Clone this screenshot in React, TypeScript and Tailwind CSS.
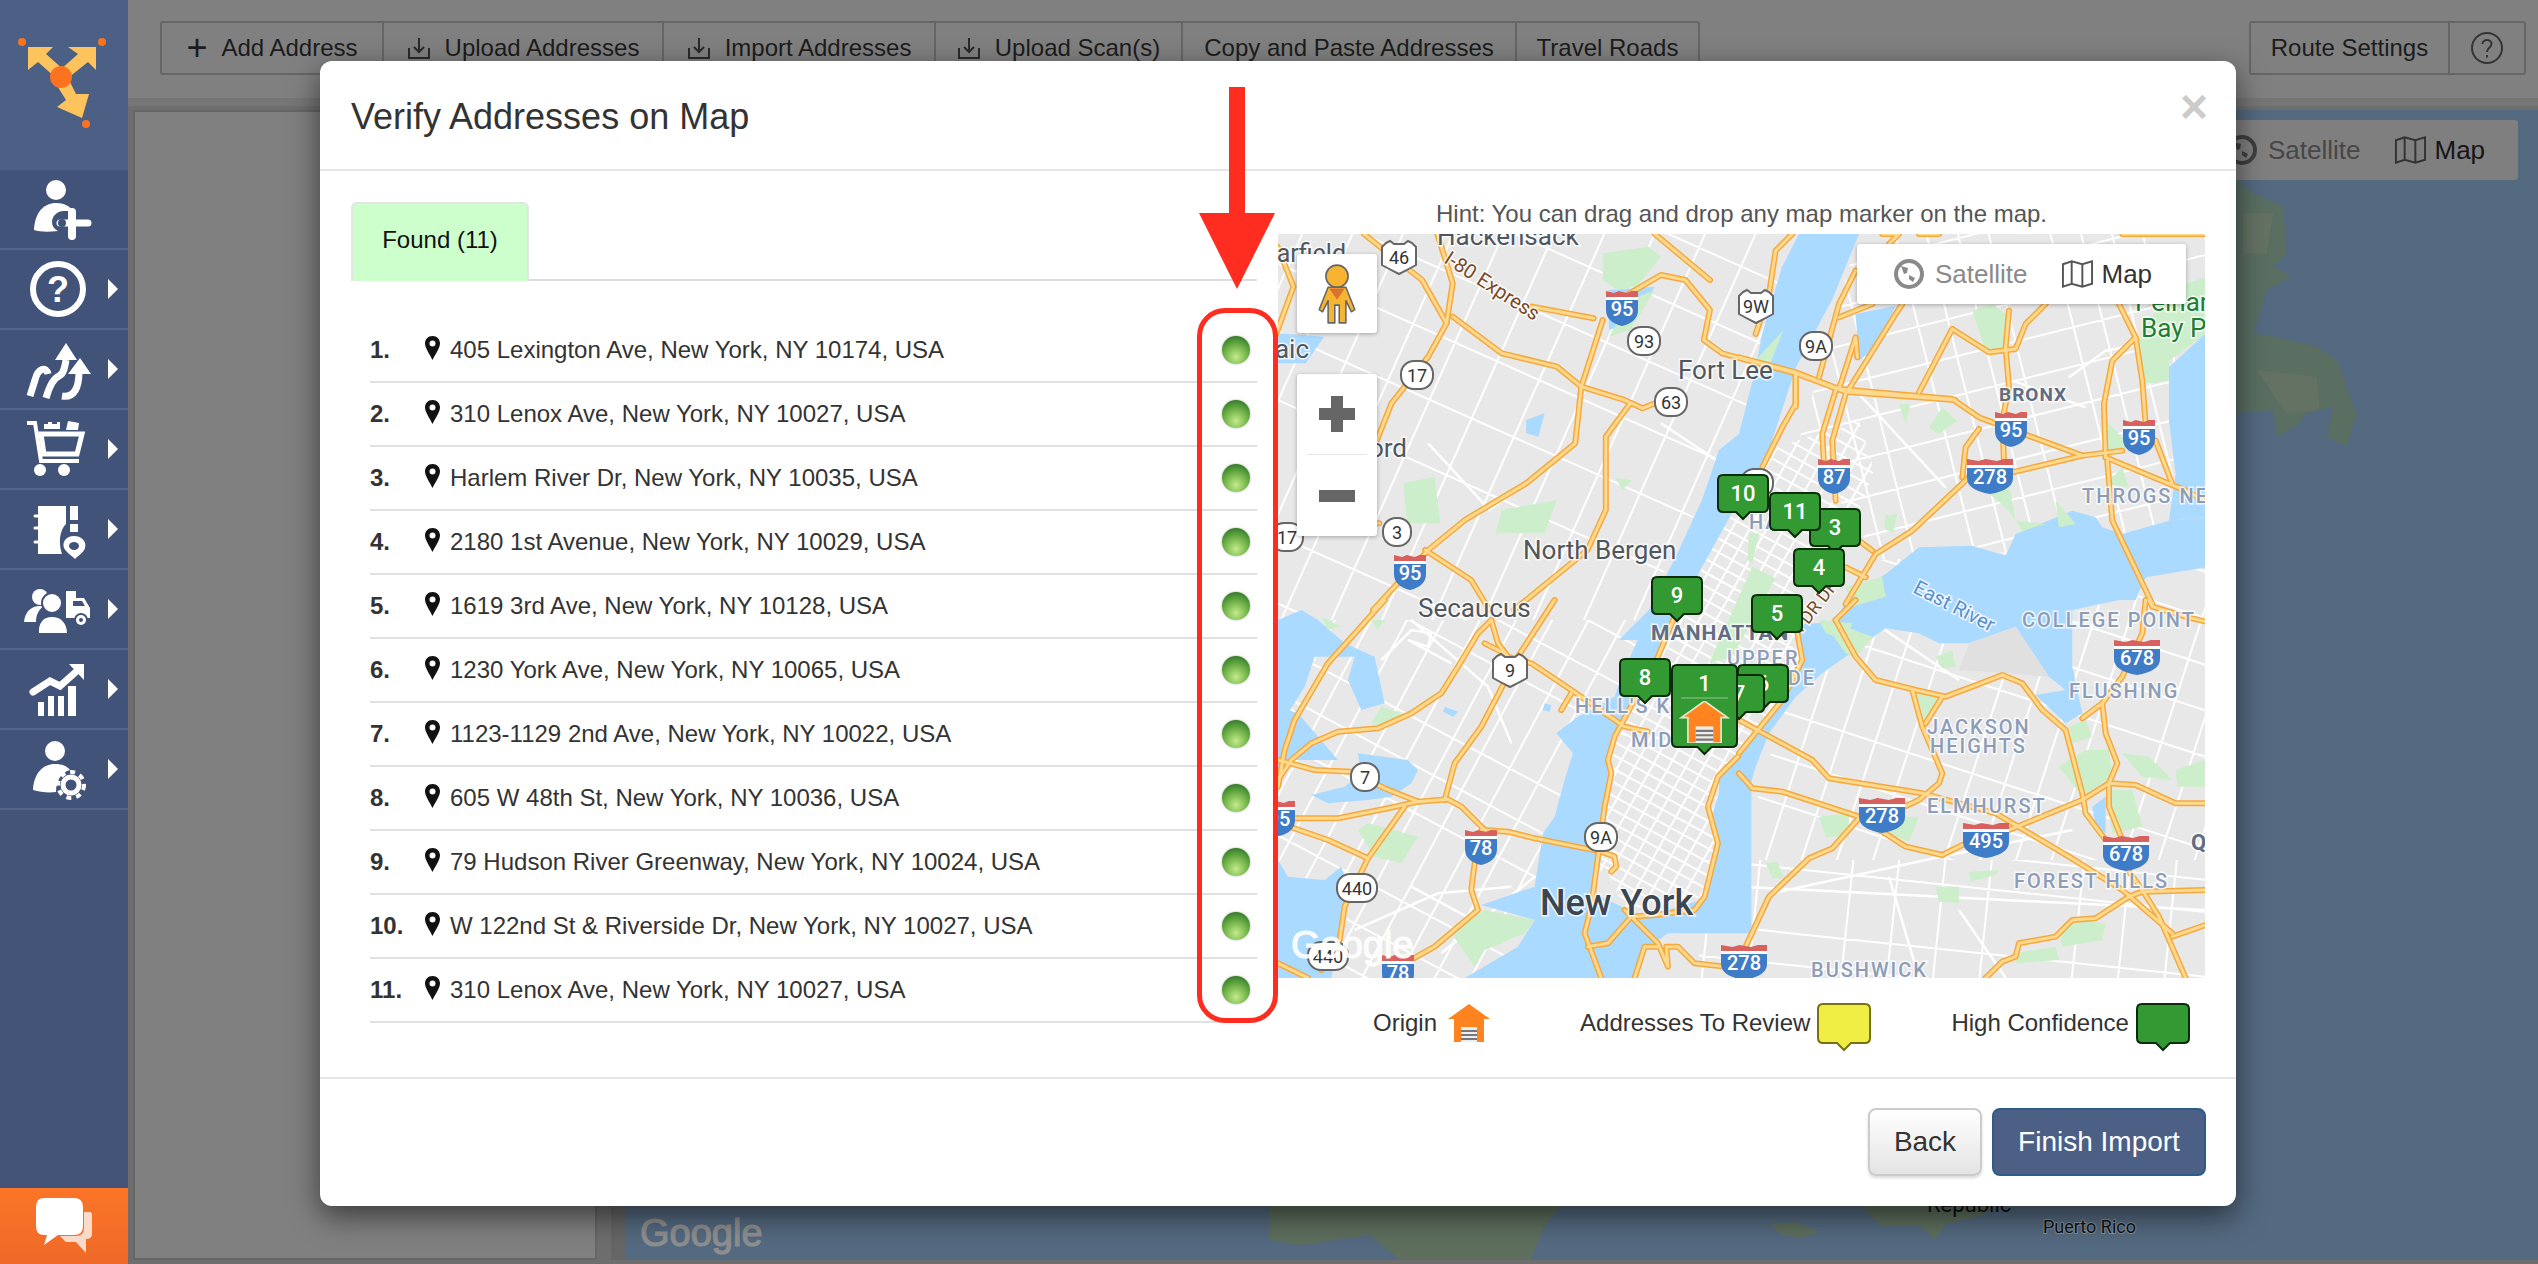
import type { ReactNode } from "react";

// groups map the coordinates read off zoomed crops onto screen coordinates
const GROUPS = {
  a: "translate(1270 190) scale(.6124 .3333)",
  b: "translate(1279 600) scale(.3333)",
  c: "translate(1740 234) scale(.3333)",
  d: "translate(1740 600) scale(.3333)",
  z: "translate(1600 450) scale(.3333)",
  s: "",
};
type GroupKey = keyof typeof GROUPS;
type Layer = Partial<Record<GroupKey, string[]>>;

const WATER: Layer = {
  s: ["M1800,234 L1783,267 L1763,334 L1757,367 L1740,434 L1720,450 L1703,500 L1680,550 L1650,610 L1620,640 L1656,640 L1686,600 L1703,567 L1733,513 L1770,450 L1797,367 L1833,300 L1860,234 Z"],
  b: [
    "M1130,0 L1075,130 L1030,230 L1010,290 L900,350 L835,400 L885,460 L860,540 L830,650 L795,700 L770,860 L610,915 L770,960 L720,1040 L560,1134 L1070,1134 L1100,1050 L1170,1000 L1420,1000 L1420,550 L1330,560 L1300,650 L1320,730 L1270,900 L1100,950 L1040,925 L950,880 L970,770 L990,600 L990,480 L1010,400 L1140,170 L1190,60 L1220,0 Z",
    "M0,60 L70,30 L120,60 L200,130 L290,170 L320,310 L250,330 L210,240 L230,170 L110,170 L80,260 L30,340 L0,330 Z",
    "M240,460 L390,480 L420,510 L400,550 L340,590 L270,600 L150,610 L100,585 L200,560 L250,520 Z",
    "M0,320 L60,340 L180,480 L40,480 L0,520 Z",
    "M0,780 L30,830 L140,840 L190,800 L215,880 L190,960 L160,1134 L0,1134 Z",
    "M800,310 L820,315 L815,335 L795,330 Z",
    "M500,320 L540,335 L525,350 L495,335 Z",
  ],
  d: [
    "M170,70 L190,180 L130,300 L0,470 L-60,540 L-60,800 L30,790 L30,570 L50,500 L90,400 L170,290 L250,220 L440,85 L540,100 L600,130 L690,130 L830,80 L930,230 L980,270 L890,285 L980,370 L1030,340 L1000,200 L1000,30 L1140,0 L1190,0 L1220,-68 L1400,-98 L1400,-248 L1290,-238 L1150,-198 L1090,-218 L1070,-248 L1000,-268 L880,-218 L830,-198 L800,-133 L700,-163 L540,-158 L440,-78 L330,-10 L290,60 L240,70 Z",
    "M1060,620 L1100,590 L1100,700 L1070,680 Z",
  ],
  c: [
    "M1290,400 L1398,300 L1398,850 L1290,860 L1310,720 L1290,560 Z",
    "M350,240 L470,215 L410,340 L360,380 Z",
  ],
  a: [
    "M555,300 L630,290 L590,400 L555,420 Z",
    "M14,430 L90,440 L60,520 L14,520 Z",
    "M420,690 L450,670 L440,740 L420,730 Z",
  ],
};

const PARKS: Layer = {
  a: [
    "M620,170 L640,200 L600,290 L570,300 L545,270 L545,190 Z",
    "M590,330 L630,300 L590,420 L555,440 Z",
    "M790,520 L840,420 L810,560 Z",
    "M220,880 L270,860 L280,1000 L225,1000 Z",
    "M380,960 L470,930 L450,1030 L370,1030 Z",
  ],
  b: [
    "M520,1000 L620,930 L770,960 L740,1000 L620,1050 L590,1100 Z",
    "M240,690 L270,670 L420,710 L370,790 L290,770 Z",
    "M280,370 L310,320 L370,340 L340,380 Z",
    "M130,50 L190,80 L150,90 Z",
    "M280,60 L320,60 L300,90 Z",
  ],
  z: [
    "M460,350 L530,385 L400,620 L330,640 Z",
    "M450,250 L480,250 L460,340 L445,330 Z",
    "M740,410 L850,380 L860,440 L760,470 Z",
    "M660,510 L760,520 L740,570 L680,550 Z",
    "M50,85 L100,90 L70,120 Z",
    "M860,200 L895,190 L880,245 L860,240 Z",
  ],
  c: [
    "M1340,150 L1398,130 L1398,300 L1290,380 L1290,440 L1220,450 L1190,350 L1210,290 L1270,200 Z",
    "M1100,560 L1180,640 L1110,650 Z",
    "M700,230 L760,210 L800,240 L800,340 L740,350 Z",
    "M480,510 L515,510 L500,570 Z",
    "M570,580 L610,520 L655,560 L600,600 Z",
    "M740,770 L810,750 L830,860 L920,870 L850,890 L810,830 Z",
    "M440,840 L470,850 L465,895 L435,880 Z",
    "M950,800 L1010,870 L960,880 Z",
    "M1150,700 L1100,750 L1170,760 Z",
  ],
  d: [
    "M530,280 L610,290 L560,370 Z",
    "M960,500 L1040,450 L1110,450 L1120,530 L1030,590 Z",
    "M1100,570 L1180,570 L1210,680 L1120,700 Z",
    "M1150,460 L1230,470 L1300,540 L1210,530 Z",
    "M1310,510 L1398,480 L1398,560 L1315,560 Z",
    "M240,650 L330,640 L330,710 L260,710 Z",
    "M480,650 L540,650 L510,725 L450,700 Z",
    "M690,815 L780,810 L770,825 L695,845 Z",
    "M590,860 L660,860 L660,910 L600,905 Z",
    "M80,790 L115,785 L135,835 L100,835 Z",
    "M960,1000 L1000,960 L1100,970 L1090,1020 L970,1040 Z",
    "M830,1060 L950,1040 L960,1080 L830,1090 Z",
    "M990,380 L1040,360 L1060,410 L1000,430 Z",
    "M250,60 L290,70 L400,110 L350,175 L320,160 Z",
    "M590,170 L640,150 L650,200 L610,205 Z",
  ],
};

const HIGHWAYS: Layer = {
  a: [
    "M275,132 L300,280 L290,400",
    "M300,380 L380,490 L470,530 L510,590 L580,630 L610,655 L630,640",
    "M430,350 L530,385",
    "M545,390 L510,590 L500,760 L420,880 L320,990 L260,1080 L170,1260",
    "M580,320 L640,255 L680,270 L720,360 L710,450 L740,490 L860,550 L940,605 L1120,630",
    "M630,132 L720,270",
    "M155,132 L250,270 L290,400 L260,500 L200,640 L170,780",
    "M590,640 L550,740 L550,960 L520,1080 L400,1260",
    "M860,550 L860,650",
    "M14,170 L40,290 L10,440",
    "M180,1000 L110,1000",
    "M255,1080 L330,1170 L360,1260",
  ],
  b: [
    "M320,0 L240,90 L150,190 L50,360 L20,450 L0,560",
    "M0,540 L40,480 L100,430 L180,395 L300,385 L400,340 L490,280 L540,200 L600,100 L640,60",
    "M0,480 L110,510 L220,515 L320,565 L420,605",
    "M0,655 L180,655 L330,625 L420,605 L510,598 L550,620 L620,690 L690,695 L770,715 L970,755 L1010,770 L1015,800 L1000,815",
    "M20,675 L150,720 L270,775 L380,620",
    "M270,775 L200,920 L185,1020 L130,1110",
    "M640,60 L660,130 L690,170 L760,190 L880,270 L1040,380 L1110,395",
    "M620,130 L680,160",
    "M850,330 L880,280",
    "M830,0 L720,170 L610,380 L530,490 L500,600",
    "M610,690 L590,790 L580,870 L600,930 L470,1040 L380,1090",
    "M1190,50 L1140,170 L1010,410 L990,480 L1000,520 L980,620 L960,770 L940,920 L920,1000 L970,1134",
    "M1380,470 L1320,530 L1290,620 L1320,730 L1280,890 L1250,930 L1130,945 L1060,950 L1040,930",
    "M1060,950 L990,1030 L930,1040",
    "M1060,950 L1140,1030 L1170,1100 L1165,1040 L1200,1040 L1250,1090 L1340,1100",
    "M1140,1040 L1100,1040 L1070,1134",
    "M0,1090 L90,1134",
  ],
  c: [
    "M0,370 L170,415 L300,465 L640,495 L720,550 L1030,665 L1150,650",
    "M1100,670 L1340,770 L1398,800",
    "M820,715 L1030,665",
    "M690,730 L520,890 L410,960 L320,1110",
    "M670,730 L680,640 L720,585",
    "M810,230 L800,340 L810,460 L790,560 L795,680",
    "M1100,670 L1095,510 L1120,380 L1190,310 L1210,440 L1220,570",
    "M1190,310 L1140,210",
    "M1105,680 L1120,860 L1240,1110",
    "M640,285 L540,475",
    "M640,285 L750,355 L830,345 L860,270 L920,210",
    "M290,470 L250,600 L255,690 L250,750",
    "M320,480 L280,620 L290,800",
    "M330,465 L470,240 L490,210",
    "M300,465 L350,310 L355,370",
    "M160,0 L110,50 L90,180 L50,300",
    "M170,420 L170,510 L130,580 L70,700",
    "M240,430 L300,210 L350,110",
    "M300,250 L400,210",
    "M360,920 L400,950",
    "M320,1000 L380,1030",
    "M1250,620 L1300,750",
    "M540,0 L600,0",
    "M430,0 L480,0 L450,30",
    "M1150,0 L1398,0",
  ],
  d: [
    "M290,60 L350,170 L410,240 L530,270 L620,290 L700,260 L790,225 L850,250 L910,330 L980,390 L1030,580 L1040,640 L1100,720 L1210,870 L1260,950 L1340,1134",
    "M350,0 L290,60",
    "M520,270 L550,380 L610,520 L600,550 L540,600 L430,650",
    "M610,290 L560,370",
    "M0,360 L220,480 L270,535 L550,580 L770,640 L990,770 L1150,870 L1300,1000",
    "M0,520 L40,565 L130,575 L360,650 L500,740 L610,765 L680,730",
    "M810,690 L1030,600 L1110,550 L1190,555 L1310,610 L1400,610",
    "M360,655 L280,745 L210,775 L90,890 L20,1040",
    "M1090,310 L1100,400 L1135,490 L1110,550 L1110,620 L1150,720",
    "M1220,0 L1210,100 L1150,230 L1090,310 L1030,355",
    "M740,1134 L790,1085 L830,1070 L840,1030 L950,1010 L1000,960 L1070,955 L1170,890 L1210,875 L1400,870",
    "M1230,0 L1240,20 L1340,50 L1400,65",
    "M1300,1010 L1400,975",
    "M170,70 L190,180 L130,300 L0,460",
  ],
  z: [],
  s: [],
};

const ROAD_EXTRAS: Layer = {
  b: [
    "M0,280 L170,480",
    "M310,180 L400,90 L460,100 L450,140 L390,120 L520,190",
    "M400,60 L630,260 L700,430",
    "M400,860 L640,990",
    "M490,1060 L770,830",
    "M230,990 L480,880 L700,860",
  ],
  d: [
    "M0,860 L1400,930",
    "M430,85 L660,240",
    "M100,880 L560,780 L1000,690",
    "M450,830 L540,1134",
    "M660,930 L800,1134",
  ],
  c: [
    "M360,480 L620,760",
    "M990,430 L1100,350 L1210,330",
    "M820,440 L1040,520",
  ],
  a: [
    "M640,700 L820,920",
    "M260,760 L360,960 L420,880",
  ],
};

const REGIONS = [
  { id: "njn", pts: "1279,234 1820,234 1740,430 1640,620 1279,620", angle: 24, sx: 46, sy: 62, w: 2 },
  { id: "jc", pts: "1279,620 1660,620 1620,760 1600,978 1279,978", angle: 28, sx: 32, sy: 42, w: 2 },
  { id: "man", pts: "1609,760 1602,857 1626,910 1706,897 1719,843 1712,817 1739,773 1783,700 1803,660 1797,623 1800,590 1850,540 1875,470 1860,420 1800,440 1770,450 1733,513 1703,567 1667,643 1640,690 1615,730", angle: 29, sx: 15, sy: 12, w: 2 },
  { id: "bx", pts: "1860,234 2206,234 2206,540 1880,560 1800,440", angle: -14, sx: 30, sy: 38, w: 2 },
  { id: "qn", pts: "1800,660 1880,560 2206,540 2206,860 1740,860", angle: 18, sx: 34, sy: 44, w: 2 },
  { id: "bk", pts: "1700,860 2206,860 2206,978 1700,978", angle: 6, sx: 46, sy: 32, w: 2 },
];

function gridPath(cx: number, cy: number, angle: number, sx: number, sy: number) {
  const r = (angle * Math.PI) / 180;
  const c = Math.cos(r);
  const s = Math.sin(r);
  const rot = (x: number, y: number) => `${Math.round(cx + x * c - y * s)},${Math.round(cy + x * s + y * c)}`;
  const out: string[] = [];
  for (let i = -40; i <= 40; i++) {
    if (sx > 20 && i % 5 === 2) continue;
    out.push(`M${rot(i * sx, -800)} L${rot(i * sx, 800)}`);
  }
  for (let i = -50; i <= 50; i++) {
    if (sy > 20 && i % 4 === 1) continue;
    out.push(`M${rot(-800, i * sy)} L${rot(800, i * sy)}`);
  }
  return out.join(" ");
}

function Paths({ layer, ...rest }: { layer: Layer; [key: string]: unknown }) {
  return (
    <>
      {(Object.keys(layer) as GroupKey[]).map((k) => (
        <g key={k} transform={GROUPS[k]}>
          {layer[k]!.map((d, i) => (
            <path key={i} d={d} vectorEffect="non-scaling-stroke" {...rest} />
          ))}
        </g>
      ))}
    </>
  );
}

function Interstate({ x, y, n }: { x: number; y: number; n: string }) {
  const w = n.length === 3 ? 46 : 32;
  const h = w / 2;
  return (
    <g transform={`translate(${x} ${y})`}>
      <path d={`M${-h},-8 H${h} V2 Q${h},14 0,18 Q${-h},14 ${-h},2 Z`} fill="#3f7cc8" />
      <path d={`M${-h},-11 L${-h},-17 L${-h * 0.5},-15 L${-h * 0.2},-17 L${h * 0.3},-15 L${h * 0.6},-17 L${h},-17 L${h},-11 Z`} fill="#d8605f" />
      <rect x={-h} y={-11} width={w} height={3} fill="#fff" />
      <text y={8} textAnchor="middle" fontSize={20} fontWeight={500} fill="#fff">
        {n}
      </text>
    </g>
  );
}

function UsShield({ x, y, n }: { x: number; y: number; n: string }) {
  return (
    <g transform={`translate(${x} ${y})`}>
      <path d="M-13,-14 L-9,-16 L-5,-13 L5,-13 L9,-16 L13,-14 L17,-10 L17,8 Q10,12 0,17 Q-10,12 -17,8 L-17,-10 Z" fill="#fff" stroke="#666" strokeWidth={2} />
      <text y={7} textAnchor="middle" fontSize={18} fill="#333">
        {n}
      </text>
    </g>
  );
}

function StateOval({ x, y, n }: { x: number; y: number; n: string }) {
  const w = n.length === 3 ? 40 : n.length === 2 ? 32 : 28;
  return (
    <g transform={`translate(${x} ${y})`}>
      <rect x={-w / 2} y={-14} width={w} height={28} rx={13} fill="#fff" stroke="#666" strokeWidth={2} />
      <text y={7} textAnchor="middle" fontSize={18} fill="#333">
        {n}
      </text>
    </g>
  );
}

function Marker({ x, y, n, w = 50, h = 37, fill = "#339933", line = "#0b2b0b" }: { x: number; y: number; n?: string; w?: number; h?: number; fill?: string; line?: string }) {
  return (
    <g transform={`translate(${x} ${y})`}>
      <path
        d={`M5,0 H${w - 5} Q${w},0 ${w},5 V${h - 5} Q${w},${h} ${w - 5},${h} H${w / 2 + 7} L${w / 2},${h + 7} L${w / 2 - 7},${h} H5 Q0,${h} 0,${h - 5} V5 Q0,0 5,0 Z`}
        fill={fill}
        stroke={line}
        strokeWidth={2}
      />
      {n && (
        <text x={w / 2} y={26} textAnchor="middle" fontSize={22} fontWeight={500} fill="#fff">
          {n}
        </text>
      )}
    </g>
  );
}

function HouseShape({ outline }: { outline?: boolean }) {
  return (
    <>
      <path d="M21,0 L42,15 L36,15 L36,38 L6,38 L6,15 L0,15 Z" fill="#ff8420" stroke={outline ? "#dfeccf" : "none"} strokeWidth={outline ? 1.5 : 0} />
      <rect x={13} y={23} width={16} height={15} fill="#eee" />
      <path d="M13,27 H29 M13,31 H29 M13,35 H29" stroke="#777" strokeWidth={2} />
    </>
  );
}

type Label = { t: string; x: number; y: number; s?: number; c?: string; w?: number; ls?: number; a?: "start" | "end"; r?: number };

const LABELS: Label[] = [
  { t: "Hackensack", x: 1438, y: 245 },
  { t: "Garfield", x: 1347, y: 262, a: "end", s: 25 },
  { t: "Passaic", x: 1310, y: 358, a: "end" },
  { t: "ord", x: 1408, y: 457, a: "end" },
  { t: "Fort Lee", x: 1679, y: 379 },
  { t: "North Bergen", x: 1524, y: 559 },
  { t: "Secaucus", x: 1419, y: 617 },
  { t: "New York", x: 1541, y: 915, s: 36, w: 500, c: "#3c4650" },
  { t: "MANHATTAN", x: 1652, y: 640, s: 21, w: 700, c: "#606d82", ls: 1 },
  { t: "HARLEM", x: 1750, y: 529, s: 20, w: 500, c: "#8d9db8", ls: 2 },
  { t: "UPPER", x: 1728, y: 665, s: 20, w: 500, c: "#8d9db8", ls: 2 },
  { t: "EAST SIDE", x: 1817, y: 685, s: 20, w: 500, c: "#8d9db8", ls: 2, a: "end" },
  { t: "HELL'S KITCHEN", x: 1576, y: 713, s: 20, w: 500, c: "#8d9db8", ls: 2 },
  { t: "MIDTOWN", x: 1632, y: 747, s: 20, w: 500, c: "#8d9db8", ls: 2 },
  { t: "BRONX", x: 2000, y: 401, s: 19, w: 700, c: "#606d82", ls: 1 },
  { t: "THROGS NECK", x: 2083, y: 503, s: 20, w: 500, c: "#8d9db8", ls: 2 },
  { t: "Pelham", x: 2136, y: 311, c: "#1e7e34" },
  { t: "Bay Park", x: 2142, y: 337, c: "#1e7e34" },
  { t: "COLLEGE POINT", x: 2023, y: 627, s: 20, w: 500, c: "#8d9db8", ls: 2 },
  { t: "FLUSHING", x: 2070, y: 698, s: 20, w: 500, c: "#8d9db8", ls: 2 },
  { t: "JACKSON", x: 1928, y: 734, s: 20, w: 500, c: "#8d9db8", ls: 2 },
  { t: "HEIGHTS", x: 1931, y: 753, s: 20, w: 500, c: "#8d9db8", ls: 2 },
  { t: "ELMHURST", x: 1928, y: 813, s: 20, w: 500, c: "#8d9db8", ls: 2 },
  { t: "FOREST HILLS", x: 2015, y: 888, s: 20, w: 500, c: "#8d9db8", ls: 2 },
  { t: "BUSHWICK", x: 1812, y: 977, s: 20, w: 500, c: "#8d9db8", ls: 2 },
  { t: "Queens", x: 2192, y: 850, s: 22, w: 700, c: "#606d82" },
  { t: "East River", x: 1913, y: 592, s: 20, c: "#5b8fd0", r: 27 },
  { t: "FDR DR", x: 1803, y: 633, s: 18, c: "#7a4a26", r: -52 },
  { t: "I-80 Express", x: 1444, y: 262, s: 20, c: "#7a4a26", r: 33 },
];

function CityMap() {
  return (
    <svg viewBox="1279 234 927 744" className="block h-[744px] w-[927px] font-['Roboto',sans-serif]">
      <defs>
        {REGIONS.map((g) => (
          <clipPath key={g.id} id={g.id}>
            <polygon points={g.pts} />
          </clipPath>
        ))}
      </defs>
      <rect x={1279} y={234} width={927} height={744} fill="#e8e8e8" />
      {REGIONS.map((g) => (
        <g key={g.id} clipPath={`url(#${g.id})`}>
          <path d={gridPath(1742, 606, g.angle, g.sx, g.sy)} stroke="#fff" strokeWidth={g.w} fill="none" />
        </g>
      ))}
      <Paths layer={ROAD_EXTRAS} stroke="#fff" strokeWidth={2.5} fill="none" />
      <Paths layer={WATER} fill="#aadaff" />
      <Paths layer={PARKS} fill="#cdeecb" />
      <polygon points="1970,643 2017,627 2050,677 2007,673 1960,670" fill="#e0e0e0" />
      <Paths layer={HIGHWAYS} stroke="#f6a83c" strokeWidth={6} fill="none" strokeLinejoin="round" strokeLinecap="round" />
      <Paths layer={HIGHWAYS} stroke="#fdd98e" strokeWidth={3} fill="none" strokeLinejoin="round" strokeLinecap="round" />

      {LABELS.map((l) => (
        <text
          key={l.t}
          x={l.x}
          y={l.y}
          fontSize={l.s ?? 26}
          fontWeight={l.w ?? 400}
          fill={l.c ?? "#50565e"}
          letterSpacing={l.ls}
          textAnchor={l.a}
          transform={l.r ? `rotate(${l.r} ${l.x} ${l.y})` : undefined}
          stroke="#ffffffcc"
          strokeWidth={3}
          paintOrder="stroke"
        >
          {l.t}
        </text>
      ))}

      <Interstate x={1623} y={308} n="95" />
      <Interstate x={2012} y={429} n="95" />
      <Interstate x={2140} y={437} n="95" />
      <Interstate x={1835} y={476} n="87" />
      <Interstate x={1991} y={476} n="278" />
      <Interstate x={1411} y={572} n="95" />
      <Interstate x={2138} y={657} n="678" />
      <Interstate x={1883} y={815} n="278" />
      <Interstate x={1987} y={840} n="495" />
      <Interstate x={2127} y={853} n="678" />
      <Interstate x={1745} y={962} n="278" />
      <Interstate x={1482} y={847} n="78" />
      <Interstate x={1399} y={972} n="78" />
      <Interstate x={1280} y={818} n="95" />
      <UsShield x={1400} y={257} n="46" />
      <UsShield x={1757} y={306} n="9W" />
      <UsShield x={1511} y={670} n="9" />
      <StateOval x={1645} y={341} n="93" />
      <StateOval x={1817} y={346} n="9A" />
      <StateOval x={1418} y={375} n="17" />
      <StateOval x={1672} y={402} n="63" />
      <StateOval x={1398} y={532} n="3" />
      <StateOval x={1288} y={537} n="17" />
      <StateOval x={1366} y={777} n="7" />
      <StateOval x={1602} y={837} n="9A" />
      <StateOval x={1358} y={888} n="440" />
      <StateOval x={1329} y={956} n="440" />
      <StateOval x={1758} y={483} n="9A" />

      <text x={1292} y={958} fontSize={38} fill="#fff" fillOpacity={0.9} stroke="#fff" strokeOpacity={0.9} strokeWidth={1.2} className="font-['Liberation_Sans',sans-serif]">
        Google
      </text>

      <Marker x={1811} y={509} n="3" />
      <Marker x={1719} y={475} n="10" />
      <Marker x={1771} y={493} n="11" />
      <Marker x={1795} y={549} n="4" />
      <Marker x={1653} y={577} n="9" />
      <Marker x={1753} y={595} n="5" />
      <Marker x={1621} y={659} n="8" />
      <Marker x={1739} y={665} n="6" />
      <Marker x={1715} y={675} n="7" />
      <Marker x={1673} y={665} n="1" w={65} h={82} />
      <path d="M1682,698 H1729" stroke="#8fc88f" strokeWidth={1} />
      <svg x={1677} y={701} width={57} height={42} viewBox="0 0 42 38">
        <HouseShape outline />
      </svg>
    </svg>
  );
}

function Pegman() {
  return (
    <svg viewBox="3 1 34 54" className="h-[60px] w-[38px]">
      <circle cx={20} cy={12} r={10} fill="#f6b431" stroke="#666" strokeWidth={1.4} />
      <path d="M12,22 H28 L36,42 L33,44 L28,34 V54 H22 V38 H18 V54 H12 V34 L7,44 L4,42 Z" fill="#f6b431" stroke="#666" strokeWidth={1.4} strokeLinejoin="round" />
      <path d="M13,23 H27 L20,33 Z" fill="#d9722e" />
    </svg>
  );
}

function GlobeIcon({ color }: { color: string }) {
  return (
    <svg viewBox="0 0 32 32" className="h-[32px] w-[32px]">
      <circle cx={16} cy={16} r={13} fill="none" stroke={color} strokeWidth={4} />
      <path d="M8,8 L15,10 L14,15 L11,16 Z M16,17 L22,20 L20,24 L16,21 Z" fill={color} />
    </svg>
  );
}

function FoldedMapIcon({ color }: { color: string }) {
  return (
    <svg viewBox="0 0 34 30" className="h-[30px] w-[33px]" fill="none" stroke={color} strokeWidth={2}>
      <path d="M2,5 L11,2 L22,5 L32,2 V25 L22,28 L11,25 L2,28 Z M11,2 V25 M22,5 V28" />
    </svg>
  );
}

function MapTypeSwitch({ dim }: { dim?: boolean }) {
  return (
    <>
      <span className="flex items-center gap-[10px]">
        <GlobeIcon color={dim ? "#3f3f3f" : "#8a8a8a"} />
        <span className={dim ? "text-[#474747]" : "text-[#8a8a8a]"}>Satellite</span>
      </span>
      <span className="flex items-center gap-[8px]">
        <FoldedMapIcon color={dim ? "#333" : "#555"} />
        <span className={dim ? "text-[#151515]" : "text-[#333]"}>Map</span>
      </span>
    </>
  );
}

function Pin() {
  return (
    <svg viewBox="0 0 15 24" className="mb-[5px] h-[24px] w-[15px] shrink-0">
      <path d="M7.5,0 C3,0 0,3.4 0,7.6 C0,12 5,19 7.5,24 C10,19 15,12 15,7.6 C15,3.4 12,0 7.5,0 Z" fill="#111" />
      <circle cx={7.5} cy={7.5} r={3} fill="#fff" />
    </svg>
  );
}

const ADDRESSES = [
  "405 Lexington Ave, New York, NY 10174, USA",
  "310 Lenox Ave, New York, NY 10027, USA",
  "Harlem River Dr, New York, NY 10035, USA",
  "2180 1st Avenue, New York, NY 10029, USA",
  "1619 3rd Ave, New York, NY 10128, USA",
  "1230 York Ave, New York, NY 10065, USA",
  "1123-1129 2nd Ave, New York, NY 10022, USA",
  "605 W 48th St, New York, NY 10036, USA",
  "79 Hudson River Greenway, New York, NY 10024, USA",
  "W 122nd St & Riverside Dr, New York, NY 10027, USA",
  "310 Lenox Ave, New York, NY 10027, USA",
];

function TrayArrow() {
  return (
    <svg viewBox="0 0 24 24" className="h-[24px] w-[24px]" fill="none" stroke="#2a2a2a" strokeWidth={2}>
      <path d="M2,12 V22 H22 V12 M12,2 V16 M7,11 L12,16 L17,11" />
    </svg>
  );
}

const TOOLBAR = [
  { label: "Add Address", w: "w-[222px]", icon: "plus" },
  { label: "Upload Addresses", w: "w-[280px]", icon: "tray" },
  { label: "Import Addresses", w: "w-[272px]", icon: "tray" },
  { label: "Upload Scan(s)", w: "w-[247px]", icon: "tray" },
  { label: "Copy and Paste Addresses", w: "w-[334px]" },
  { label: "Travel Roads", w: "w-[181px]" },
];

function Toolbar() {
  return (
    <div className="flex h-[98px] items-start justify-between bg-[#808080] pl-[32px] pr-[12px] pt-[21px] text-[24px] text-[#1c1c1c]">
      <div className="flex h-[54px] rounded-[3px] border-2 border-[#666]">
        {TOOLBAR.map((b) => (
          <div key={b.label} className={`${b.w} flex items-center justify-center gap-[14px] border-r-2 border-[#666] last:border-r-0`}>
            {b.icon === "plus" && <span className="text-[36px] font-light leading-none">+</span>}
            {b.icon === "tray" && <TrayArrow />}
            <span>{b.label}</span>
          </div>
        ))}
      </div>
      <div className="flex h-[54px] rounded-[3px] border-2 border-[#666]">
        <div className="flex w-[199px] items-center justify-center border-r-2 border-[#666]">Route Settings</div>
        <div className="flex w-[74px] items-center justify-center">
          <svg viewBox="0 0 32 32" className="h-[32px] w-[32px]" fill="none" stroke="#333" strokeWidth={2}>
            <circle cx={16} cy={16} r={15} />
            <path d="M11.5,12 C11.5,6.5 20.5,6.5 20.5,12 C20.5,15.5 16,15.5 16,20 M16,23 V25.5" />
          </svg>
        </div>
      </div>
    </div>
  );
}

function BackgroundMap() {
  return (
    <svg viewBox="625 110 1913 1150" className="block h-[1150px] w-[1913px] font-['Roboto',sans-serif]">
      <rect x={625} y={110} width={1913} height={1150} fill="#546a80" />
      <g transform="translate(2100 0) scale(.3333)" fill="#5a6e62">
        <path d="M410,540 L460,580 L550,620 L560,760 L520,800 L575,830 L500,870 L460,1000 L520,1010 L650,1040 L710,1080 L740,1160 L770,1240 L740,1340 L680,1310 L700,1220 L620,1240 L600,1270 L530,1310 L520,1230 L410,1240 Z" />
        <path d="M430,640 L520,640 L500,760 L430,760 Z M470,1110 L650,1130 L660,1230 L560,1240 Z" fill="#647264" />
      </g>
      <g fill="#5e6f5e">
        <path d="M1270,1206 H1561 L1545,1225 L1530,1260 H1400 L1370,1235 L1300,1245 L1270,1240 Z" />
        <path d="M1860,1206 H1998 L1975,1218 L1945,1224 L1935,1240 L1920,1225 L1880,1225 Z" />
        <path d="M1771,1224 L1795,1222 L1820,1232 L1800,1238 L1780,1234 Z" />
      </g>
      <text x={1927} y={1212} fontSize={22} fill="#111">
        Republic
      </text>
      <text x={2043} y={1233} fontSize={18} fill="#111" stroke="#ffffff44" strokeWidth={2} paintOrder="stroke">
        Puerto Rico
      </text>
      <text x={640} y={1246} fontSize={38} fill="#8f8f8f" stroke="#8f8f8f" strokeWidth={1.2} className="font-['Liberation_Sans',sans-serif]">
        Google
      </text>
    </svg>
  );
}

function RowIcon({ children, arrow = true }: { children: ReactNode; arrow?: boolean }) {
  return (
    <div className="h-[80px] border-b-[2px] border-[#54658d] bg-[#42537a]">
      <svg viewBox="0 0 128 78" className="block h-[78px] w-[128px]" fill="#fff">
        {children}
        {arrow && <path d="M108,29 L118,39 L108,49 Z" />}
      </svg>
    </div>
  );
}

function Sidebar() {
  return (
    <div className="flex w-[128px] shrink-0 flex-col bg-[#445478]">
      <div className="h-[170px] bg-[#4c5f85]">
        <svg viewBox="0 0 128 170" className="block h-[170px] w-[128px]">
          <g fill="#fdc35d">
            <path d="M28,47 H53 L46,54 L64,70 L56,78 L38,62 L28,70 Z" />
            <path d="M96,47 V70 L88,62 L68,78 L60,70 L78,54 L68,47 Z" />
            <path d="M82,118 L57,107 L66,100 L56,84 L68,78 L76,94 L89,94 Z" />
          </g>
          <ellipse cx={61} cy={77} rx={11} ry={11} fill="#fb7321" />
          <ellipse cx={22} cy={42} rx={4} ry={4} fill="#fb7321" />
          <ellipse cx={102} cy={42} rx={4} ry={4} fill="#fb7321" />
          <ellipse cx={86} cy={124} rx={4} ry={4} fill="#fb7321" />
        </svg>
      </div>
      <RowIcon arrow={false}>
        <ellipse cx={56} cy={20} rx={10} ry={10} />
        <path d="M34,60 C35,42 44,33 56,33 C64,33 70,36 73,41 H64 C56,41 52,47 52,52 C52,56 54,59 58,61 C48,62 40,62 34,60 Z" />
        <path d="M60,53 H88" stroke="#fff" strokeWidth={7} strokeLinecap="round" />
        <path d="M72,42 V66" stroke="#fff" strokeWidth={8} strokeLinecap="round" />
        <circle cx={62} cy={53} r={4} fill="#42537a" />
      </RowIcon>
      <RowIcon>
        <circle cx={58} cy={39} r={25} fill="none" stroke="#fff" strokeWidth={6} />
        <text x={58} y={52} fontSize={36} fontWeight={700} textAnchor="middle" className="font-['Liberation_Sans',sans-serif]">
          ?
        </text>
      </RowIcon>
      <RowIcon>
        <g fill="none" stroke="#fff" strokeWidth={7}>
          <path d="M30,66 L35,50 C38,38 46,36 48,44" />
          <path d="M46,68 C50,54 54,48 59,46 C64,44 65,36 66,30" />
          <path d="M62,66 C74,68 79,58 79,42" />
        </g>
        <path d="M55,30 L66,13 L77,30 Z M68,44 L80,28 L91,44 Z" />
      </RowIcon>
      <RowIcon>
        <path d="M27,13 H35 L41,51 H79" fill="none" stroke="#fff" strokeWidth={4} />
        <path d="M41,24 H82 L77,44 H44 Z" fill="none" stroke="#fff" strokeWidth={5} />
        <path d="M44,19 V14 H48 V12 H52 V14 H57 V12 H60 V19 Z M66,20 L68,11 L79,13 L78,20 Z" />
        <ellipse cx={40} cy={60} rx={6} ry={6} />
        <ellipse cx={64} cy={60} rx={6} ry={6} />
      </RowIcon>
      <RowIcon>
        <path d="M38,16 H66 V34 C60,40 58,52 62,64 H38 Z" />
        <path d="M70,16 H78 V30 H70 Z M70,34 H78 V42 H70 Z" />
        <path d="M35,26 H43 M35,38 H43 M35,52 H43" stroke="#fff" strokeWidth={3} strokeLinecap="round" />
        <path d="M74,46 C66,46 62,52 64,58 C66,62 72,66 75,69 C78,66 84,62 85,58 C87,52 82,46 74,46 Z" />
        <ellipse cx={74} cy={56} rx={5} ry={4} fill="#42537a" />
      </RowIcon>
      <RowIcon>
        <path d="M66,21 H76 L76,28 H84 L90,38 V48 H66 Z" />
        <path d="M73,31 H82 L85,36 H73 Z" fill="#42537a" />
        <circle cx={81} cy={50} r={7} fill="#42537a" />
        <circle cx={81} cy={50} r={5} />
        <circle cx={81} cy={50} r={2} fill="#42537a" />
        <circle cx={40} cy={27} r={8} />
        <path d="M24,52 C25,42 31,36 40,36 H44 C38,40 36,46 36,52 Z" />
        <circle cx={52} cy={33} r={10} stroke="#42537a" strokeWidth={2} />
        <path d="M38,64 C37,52 43,46 52,46 C61,46 68,52 68,64 Z" stroke="#42537a" strokeWidth={2} />
      </RowIcon>
      <RowIcon>
        <path d="M33,42 L50,31 L60,36 L78,20" fill="none" stroke="#fff" strokeWidth={7} strokeLinecap="round" />
        <path d="M69,14 H84 V30 Z" />
        <path d="M38,52 H44 V66 H38 Z M48,46 H54 V66 H48 Z M58,46 H64 V66 H58 Z M68,36 H76 V66 H68 Z" />
      </RowIcon>
      <RowIcon>
        <ellipse cx={55} cy={21} rx={10} ry={10} />
        <path d="M33,60 C34,43 43,34 55,34 C62,34 67,36 70,40 C62,42 56,50 56,62 C48,63 40,62 33,60 Z" />
        <circle cx={71} cy={55} r={8} fill="none" stroke="#fff" strokeWidth={5} />
        <circle cx={71} cy={55} r={13} fill="none" stroke="#fff" strokeWidth={4} strokeDasharray="5 5" />
      </RowIcon>
      <div className="mt-auto flex h-[76px] items-center justify-center bg-gradient-to-b from-[#fb7427] to-[#ef6a29]">
        <svg viewBox="0 0 56 56" className="h-[56px] w-[56px]" fill="#fff">
          <path d="M48,14 H54 Q56,14 56,18 V36 Q56,41 50,41 V55 L40,44 H30 L24,38 H40 Q48,38 48,30 Z" fillOpacity={0.75} />
          <path d="M8,0 H38 Q47,0 47,9 V28 Q47,37 38,37 H22 L8,47 L11,37 H8 Q0,37 0,28 V9 Q0,0 8,0 Z" />
        </svg>
      </div>
    </div>
  );
}

function Modal() {
  return (
    <div className="absolute left-[320px] top-[61px] flex h-[1145px] w-[1916px] flex-col rounded-[12px] bg-white text-[#333] shadow-[0_10px_30px_rgba(0,0,0,0.55)]">
      <div className="relative flex h-[110px] shrink-0 items-center border-b-2 border-[#e5e5e5] pl-[31px] pt-[4px] text-[36px]">
        Verify Addresses on Map
        <span className="absolute right-[28px] top-[22px] text-[48px] font-bold leading-none text-[#cbcbcb]">×</span>
      </div>

      <div className="flex h-[906px] shrink-0 gap-[21px] px-[31px]">
        <div className="w-[907px] pt-[31px]">
          <div className="flex h-[79px] items-start border-b-2 border-[#ddd]">
            <div className="flex h-[79px] w-[178px] items-center justify-center rounded-t-[6px] border-2 border-b-0 border-[#e4e4e4] bg-[#ccffcc] pb-[6px] text-[24px] text-[#111]">
              Found (11)
            </div>
          </div>
          <div className="mt-[38px] pl-[19px]">
            {ADDRESSES.map((a, i) => (
              <div key={i} className="flex h-[64px] items-center border-b-2 border-[#e0e0e0] text-[24px]">
                <span className="w-[55px] shrink-0 font-bold">{i + 1}.</span>
                <Pin />
                <span className="ml-[10px]">{a}</span>
                <span className="ml-auto mr-[7px] h-[28px] w-[28px] rounded-full bg-[radial-gradient(circle_at_50%_75%,#c4ea8c_0%,#7fbd52_38%,#3f8a2e_75%,#1f5019_100%)] shadow-[0_0_2px_rgba(0,0,0,0.4)]" />
              </div>
            ))}
          </div>
        </div>

        <div className="w-[927px]">
          <div className="h-[63px] pt-[30px] text-center text-[24px] leading-[26px] text-[#555]">Hint: You can drag and drop any map marker on the map.</div>
          <div className="relative h-[744px] overflow-hidden">
            <CityMap />
            <div className="absolute left-[19px] top-[20px] flex h-[79px] w-[80px] items-center justify-center rounded-[3px] bg-white shadow-[0_1px_4px_rgba(0,0,0,0.3)]">
              <Pegman />
            </div>
            <div className="absolute left-[19px] top-[140px] flex h-[162px] w-[80px] flex-col items-center rounded-[3px] bg-white shadow-[0_1px_4px_rgba(0,0,0,0.3)]">
              <div className="relative flex h-[81px] w-[60px] items-center justify-center border-b border-[#e6e6e6]">
                <span className="h-[12px] w-[36px] bg-[#666]" />
                <span className="absolute h-[36px] w-[12px] bg-[#666]" />
              </div>
              <div className="flex h-[81px] items-center justify-center">
                <span className="h-[12px] w-[36px] bg-[#666]" />
              </div>
            </div>
            <div className="absolute left-[579px] top-[10px] flex h-[60px] w-[329px] items-center gap-[33px] rounded-[3px] bg-white pl-[36px] text-[26px] shadow-[0_1px_4px_rgba(0,0,0,0.3)]">
              <MapTypeSwitch />
            </div>
          </div>
          <div className="flex h-[99px] items-center pl-[95px] text-[24px]">
            <span className="mb-[10px]">Origin</span>
            <svg viewBox="0 0 42 38" className="ml-[11px] mb-[10px] h-[38px] w-[42px]">
              <HouseShape />
            </svg>
            <span className="mb-[10px] ml-[90px]">Addresses To Review</span>
            <svg viewBox="-1 -1 54 50" className="ml-[7px] h-[50px] w-[54px]">
              <Marker x={0} y={0} w={52} h={39} fill="#f0ee45" line="#77720f" />
            </svg>
            <span className="mb-[10px] ml-[80px]">High Confidence</span>
            <svg viewBox="-1 -1 54 50" className="ml-[7px] h-[50px] w-[54px]">
              <Marker x={0} y={0} w={52} h={39} />
            </svg>
          </div>
        </div>
      </div>

      <div className="flex flex-1 items-start justify-end gap-[10px] border-t-2 border-[#e5e5e5] pr-[30px] pt-[29px] text-[28px]">
        <button className="flex h-[68px] w-[114px] items-center justify-center rounded-[8px] border-2 border-[#ccc] bg-gradient-to-b from-white to-[#e4e4e4] text-[#333] shadow-[0_2px_3px_rgba(0,0,0,0.15)]">
          Back
        </button>
        <button className="flex h-[68px] w-[214px] items-center justify-center rounded-[8px] border-2 border-[#2b5c8a] bg-[#4c5f85] text-white">Finish Import</button>
      </div>
    </div>
  );
}

function Annotation() {
  return (
    <>
      <svg viewBox="0 0 76 202" className="absolute left-[1199px] top-[87px] h-[202px] w-[76px]">
        <path d="M30,0 H46 V126 H76 L38,202 L0,126 H30 Z" fill="#ff2d1f" />
      </svg>
      <div className="pointer-events-none absolute left-[1197px] top-[308px] h-[715px] w-[81px] rounded-[28px] border-[5px] border-[#ff2d1f]" />
    </>
  );
}

export default function App() {
  return (
    <div className="relative flex h-[1264px] w-[2538px] overflow-hidden bg-[#6e6e6e] font-['Liberation_Sans',Arial,sans-serif]">
      <Sidebar />
      <div className="flex min-w-0 flex-1 flex-col">
        <Toolbar />
        <div className="h-[8px] bg-[#767676]" />
        <div className="flex flex-1 gap-[14px] border-l-[5px] border-[#6e6e6e] pb-[4px] pt-[4px]">
          <div className="w-[464px] border-2 border-[#666] bg-[#808080]" />
          <div className="relative flex-1 overflow-hidden border-l-[14px] border-[#666]">
            <BackgroundMap />
            <div className="absolute right-[20px] top-[10px] flex h-[60px] w-[329px] items-center gap-[33px] rounded-[3px] bg-[#7f7f7f] pl-[37px] text-[26px]">
              <MapTypeSwitch dim />
            </div>
          </div>
        </div>
      </div>
      <Modal />
      <Annotation />
    </div>
  );
}
